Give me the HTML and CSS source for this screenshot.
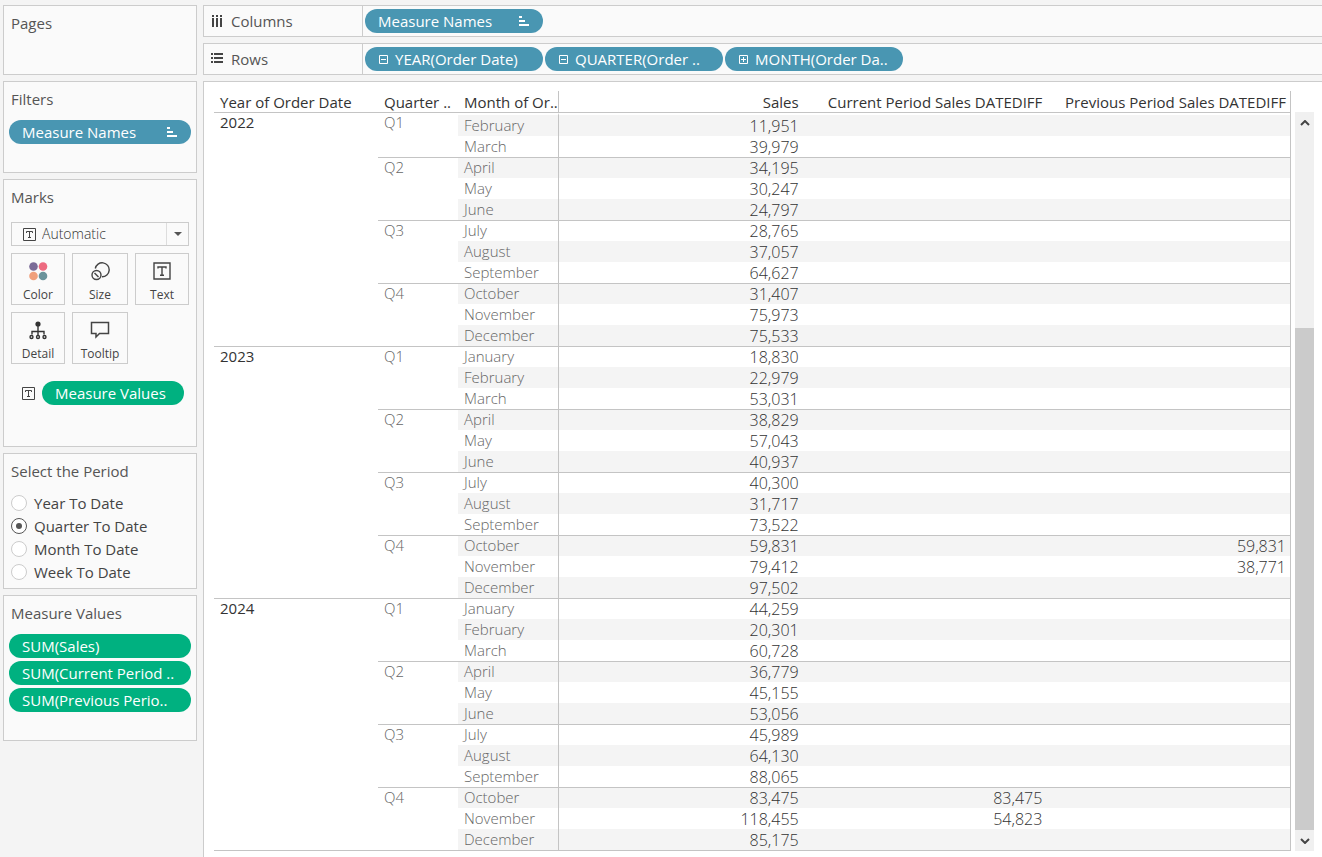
FILE: index.html
```html
<!DOCTYPE html>
<html lang="en">
<head>
  <meta charset="utf-8" />
  <meta name="viewport" content="width=device-width, initial-scale=1" />
  <title>Period Sales</title>
  <link rel="stylesheet" href="styles.css">
</head>
<body>

  <svg class="sprite" aria-hidden="true">
    <symbol id="sort" viewBox="0 0 10 10">
      <path d="M0 0h3v2H0zM0 4h6v2H0zM0 8h10v2H0z" fill="currentColor" />
    </symbol>
    <symbol id="text" viewBox="0 0 13 13">
      <path d="M.5.5h12v12H.5z" fill="none" stroke="currentColor" />
      <path d="M3.500 5V3.500h6V5M6.500 3.500v6M5 9.500h3" fill="none" stroke="currentColor" />
    </symbol>
    <symbol id="minus" viewBox="0 0 9 9">
      <path d="M.5.5h8v8h-8zM2 4.500h5" fill="none" stroke="currentColor" />
    </symbol>
    <symbol id="plus" viewBox="0 0 9 9">
      <path d="M.5.5h8v8h-8zM2 4.500h5M4.500 2v5" fill="none" stroke="currentColor" />
    </symbol>
  </svg>

  <aside class="sidebar">
    <section class="card pages">
      <h2>Pages</h2>
    </section>

    <section class="card filters">
      <h2>Filters</h2>
      <button class="pill blue"><span>Measure Names</span><svg class="sort"><use href="#sort" /></svg></button>
    </section>

    <section class="card marks">
      <h2>Marks</h2>
      <div class="mark-type">
        <svg class="type-icon"><use href="#text" /></svg>
        <select aria-label="Mark type">
          <option>Automatic</option>
        </select>
        <span class="arrow"></span>
      </div>
      <div class="mark-buttons">
        <button>
          <svg viewBox="0 0 20 20">
            <circle cx="5.500" cy="5.500" r="4.300" fill="#7b6c98" />
            <circle cx="15" cy="5.500" r="4.300" fill="#ed6a80" />
            <circle cx="5.500" cy="15" r="4.300" fill="#f0a07c" />
            <circle cx="15" cy="15" r="4.300" fill="#6b939b" />
          </svg>
          Color
        </button>
        <button>
          <svg viewBox="0 0 20 20" fill="none" stroke="#444" stroke-width="1.400">
            <path d="M5.300 7.500A7 7 0 1 1 12 15.800" />
            <circle cx="6.500" cy="14" r="4.500" />
            <path d="M4.500 12l4 4" />
          </svg>
          Size
        </button>
        <button>
          <svg viewBox="0 0 20 20" fill="none" stroke="#444" stroke-width="1.400">
            <path d="M2 2h16v16H2z" />
            <path d="M6 7.500V6h8v1.500M10 6v8M8 14.300h4" />
          </svg>
          Text
        </button>
        <button>
          <svg viewBox="0 0 20 20" fill="none" stroke="#333" stroke-width="1.400">
            <circle cx="10" cy="4" r="2.600" fill="#333" stroke="none" />
            <path d="M10 6v9M4 14.500V11.500h12v3" />
            <circle cx="3.500" cy="17" r="1.500" />
            <circle cx="10" cy="17" r="1.500" />
            <circle cx="16.500" cy="17" r="1.500" />
          </svg>
          Detail
        </button>
        <button>
          <svg viewBox="0 0 20 20" fill="none" stroke="#444" stroke-width="1.500">
            <path d="M1.500 2.500h17v11h-9L6 17v-3.500H1.500z" />
          </svg>
          Tooltip
        </button>
      </div>
      <div class="encoding">
        <svg><use href="#text" /></svg>
        <button class="pill green"><span>Measure Values</span></button>
      </div>
    </section>

    <section class="card period">
      <h2>Select the Period</h2>
      <label><input type="radio" name="period" /><span>Year To Date</span></label>
      <label><input type="radio" name="period" checked /><span>Quarter To Date</span></label>
      <label><input type="radio" name="period" /><span>Month To Date</span></label>
      <label><input type="radio" name="period" /><span>Week To Date</span></label>
    </section>

    <section class="card values">
      <h2>Measure Values</h2>
      <button class="pill green"><span>SUM(Sales)</span></button>
      <button class="pill green"><span>SUM(Current Period ..</span></button>
      <button class="pill green"><span>SUM(Previous Perio..</span></button>
    </section>
  </aside>

  <main>
    <div class="shelf">
      <h2>
        <svg viewBox="0 0 12 12" fill="#444"><path d="M1 0h2v2H1zM5 0h2v2H5zM9 0h2v2H9zM1 3h2v9H1zM5 3h2v9H5zM9 3h2v9H9z" /></svg>
        Columns
      </h2>
      <button class="pill blue"><span>Measure Names</span><svg class="sort"><use href="#sort" /></svg></button>
    </div>
    <div class="shelf">
      <h2>
        <svg viewBox="0 0 12 12" fill="#444"><path d="M0 0h2v2H0zM0 4h2v2H0zM0 8h2v2H0zM3 0h9v2H3zM3 4h9v2H3zM3 8h9v2H3z" /></svg>
        Rows
      </h2>
      <button class="pill blue"><svg class="expand"><use href="#minus" /></svg><span>YEAR(Order Date)</span></button>
      <button class="pill blue"><svg class="expand"><use href="#minus" /></svg><span>QUARTER(Order ..</span></button>
      <button class="pill blue"><svg class="expand"><use href="#plus" /></svg><span>MONTH(Order Da..</span></button>
    </div>

    <div class="sheet">
      <table>
        <colgroup>
          <col class="col-year"><col class="col-quarter"><col class="col-month"><col><col><col>
        </colgroup>
        <thead>
          <tr>
            <th>Year of Order Date</th>
            <th>Quarter ..</th>
            <th class="month">Month of Or..</th>
            <th class="num">Sales</th>
            <th class="num">Current Period Sales DATEDIFF</th>
            <th class="num">Previous Period Sales DATEDIFF</th>
          </tr>
        </thead>
        <tbody>
          <tr><th class="year" rowspan="11">2022</th><th class="quarter" rowspan="2">Q1</th><th class="month">February</th><td>11,951</td><td></td><td></td></tr>
          <tr><th class="month">March</th><td>39,979</td><td></td><td></td></tr>
          <tr class="line"><th class="quarter" rowspan="3">Q2</th><th class="month">April</th><td>34,195</td><td></td><td></td></tr>
          <tr><th class="month">May</th><td>30,247</td><td></td><td></td></tr>
          <tr><th class="month">June</th><td>24,797</td><td></td><td></td></tr>
          <tr class="line"><th class="quarter" rowspan="3">Q3</th><th class="month">July</th><td>28,765</td><td></td><td></td></tr>
          <tr><th class="month">August</th><td>37,057</td><td></td><td></td></tr>
          <tr><th class="month">September</th><td>64,627</td><td></td><td></td></tr>
          <tr class="line"><th class="quarter" rowspan="3">Q4</th><th class="month">October</th><td>31,407</td><td></td><td></td></tr>
          <tr><th class="month">November</th><td>75,973</td><td></td><td></td></tr>
          <tr><th class="month">December</th><td>75,533</td><td></td><td></td></tr>

          <tr class="line"><th class="year" rowspan="12">2023</th><th class="quarter" rowspan="3">Q1</th><th class="month">January</th><td>18,830</td><td></td><td></td></tr>
          <tr><th class="month">February</th><td>22,979</td><td></td><td></td></tr>
          <tr><th class="month">March</th><td>53,031</td><td></td><td></td></tr>
          <tr class="line"><th class="quarter" rowspan="3">Q2</th><th class="month">April</th><td>38,829</td><td></td><td></td></tr>
          <tr><th class="month">May</th><td>57,043</td><td></td><td></td></tr>
          <tr><th class="month">June</th><td>40,937</td><td></td><td></td></tr>
          <tr class="line"><th class="quarter" rowspan="3">Q3</th><th class="month">July</th><td>40,300</td><td></td><td></td></tr>
          <tr><th class="month">August</th><td>31,717</td><td></td><td></td></tr>
          <tr><th class="month">September</th><td>73,522</td><td></td><td></td></tr>
          <tr class="line"><th class="quarter" rowspan="3">Q4</th><th class="month">October</th><td>59,831</td><td></td><td>59,831</td></tr>
          <tr><th class="month">November</th><td>79,412</td><td></td><td>38,771</td></tr>
          <tr><th class="month">December</th><td>97,502</td><td></td><td></td></tr>

          <tr class="line"><th class="year" rowspan="12">2024</th><th class="quarter" rowspan="3">Q1</th><th class="month">January</th><td>44,259</td><td></td><td></td></tr>
          <tr><th class="month">February</th><td>20,301</td><td></td><td></td></tr>
          <tr><th class="month">March</th><td>60,728</td><td></td><td></td></tr>
          <tr class="line"><th class="quarter" rowspan="3">Q2</th><th class="month">April</th><td>36,779</td><td></td><td></td></tr>
          <tr><th class="month">May</th><td>45,155</td><td></td><td></td></tr>
          <tr><th class="month">June</th><td>53,056</td><td></td><td></td></tr>
          <tr class="line"><th class="quarter" rowspan="3">Q3</th><th class="month">July</th><td>45,989</td><td></td><td></td></tr>
          <tr><th class="month">August</th><td>64,130</td><td></td><td></td></tr>
          <tr><th class="month">September</th><td>88,065</td><td></td><td></td></tr>
          <tr class="line"><th class="quarter" rowspan="3">Q4</th><th class="month">October</th><td>83,475</td><td>83,475</td><td></td></tr>
          <tr><th class="month">November</th><td>118,455</td><td>54,823</td><td></td></tr>
          <tr><th class="month">December</th><td>85,175</td><td></td><td></td></tr>
        </tbody>
      </table>

      <div class="scrollbar">
        <button aria-label="Scroll up"><svg viewBox="0 0 10 6"><path d="M1 5l4-4 4 4" /></svg></button>
        <div class="track"><div class="thumb"></div></div>
        <button aria-label="Scroll down"><svg viewBox="0 0 10 6"><path d="M1 1l4 4 4-4" /></svg></button>
      </div>
    </div>
  </main>

</body>
</html>
```

FILE: styles.css
```css
* {
  box-sizing: border-box;
}
body {
  display: flex;
  gap: 6px;
  min-height: 100vh;
  margin: 0;
  padding: 5px 0 0 3px;
  font: 15px/20px "Open Sans", "Noto Sans", sans-serif;
  color: #444;
  background: #f4f4f4;
}
h2 {
  margin: 0;
  font-size: 15px;
  font-weight: 400;
  line-height: 20px;
  color: #555;
}
button {
  padding: 0;
  border: none;
  font: inherit;
  color: inherit;
  background: none;
  cursor: pointer;
}
svg {
  display: block;
  flex: none;
}
.sprite {
  position: absolute;
  width: 0;
  height: 0;
}

/* sidebar */
.sidebar {
  display: flex;
  flex: none;
  flex-direction: column;
  gap: 6px;
  width: 194px;
}
.card {
  padding: 7px;
  border: 1px solid #ccc;
  background: #fafafa;
}
.card h2 {
  flex: none;
}
.pages {
  min-height: 70px;
}
.filters, .values {
  padding: 7px 5px 28px;
}
.filters h2, .values h2 {
  margin: 0 2px 11px;
}
.marks {
  padding-bottom: 41px;
}
.period {
  padding-bottom: 5px;
}

.pill {
  display: flex;
  align-items: center;
  width: 100%;
  height: 24px;
  padding: 0 13px;
  border-radius: 12px;
  font-weight: 500;
  color: #fff;
  white-space: nowrap;
}
.pill + .pill {
  margin-top: 3px;
}
.blue {
  background: #4996b2;
}
.green {
  background: #00b180;
}
.sort {
  width: 10px;
  height: 10px;
  margin-left: auto;
  margin-right: 1px;
}
.expand {
  width: 9px;
  height: 9px;
  margin: 0 7px 0 1px;
}

.mark-type {
  display: grid;
  grid-template-columns: 30px 1fr 22px;
  align-items: center;
  height: 24px;
  margin-top: 15px;
  border: 1px solid #ccc;
}
.type-icon {
  width: 13px;
  height: 13px;
  margin-left: 11px;
}
.mark-type select {
  height: 22px;
  padding: 0;
  border: none;
  font: inherit;
  font-size: 14px;
  font-weight: 300;
  color: #333;
  background: none;
  appearance: none;
}
.arrow {
  display: grid;
  place-items: center;
  height: 22px;
  border-left: 1px solid #ddd;
}
.arrow::after {
  content: "";
  border: 4px solid transparent;
  border-top-color: #555;
  border-bottom: none;
}
.mark-buttons {
  display: grid;
  grid-template-columns: 54px 56px 54px;
  justify-content: space-between;
  row-gap: 7px;
  margin-top: 7px;
}
.mark-buttons button {
  display: flex;
  flex-direction: column;
  align-items: center;
  gap: 6px;
  height: 52px;
  padding-top: 7px;
  border: 1px solid #ccc;
  font-size: 12px;
  line-height: 16px;
}
.mark-buttons svg {
  width: 20px;
  height: 20px;
}
.encoding {
  display: flex;
  align-items: center;
  gap: 7px;
  margin-top: 17px;
  padding: 0 5px 0 11px;
}
.encoding svg {
  width: 13px;
  height: 13px;
}

.period h2 {
  margin-bottom: 10px;
}
.period label {
  display: flex;
  align-items: center;
  gap: 7px;
  height: 23px;
}
.period input {
  display: grid;
  place-items: center;
  width: 16px;
  height: 16px;
  margin: 0;
  border: 1px solid #ccc;
  border-radius: 50%;
  background: #fff;
  appearance: none;
}
.period input:checked {
  border-color: #555;
}
.period input:checked::after {
  content: "";
  width: 6px;
  height: 6px;
  border-radius: 50%;
  background: #555;
}

/* shelves */
main {
  display: flex;
  flex: 1;
  flex-direction: column;
  gap: 6px;
  min-width: 0;
}
.shelf {
  display: flex;
  align-items: center;
  gap: 2px;
  height: 32px;
  border: 1px solid #ccc;
  border-right: none;
  background: #fafafa;
}
.shelf h2 {
  display: flex;
  align-items: center;
  gap: 8px;
  width: 159px;
  height: 30px;
  padding-left: 7px;
  border-right: 1px solid #ccc;
}
.shelf h2 svg {
  width: 12px;
  height: 12px;
}
.shelf .pill {
  width: 178px;
  margin: 0;
}

/* view */
.sheet {
  display: flex;
  flex: 1;
  align-items: flex-start;
  gap: 4px;
  padding: 9px 7px 6px 10px;
  border: 1px solid #ccc;
  border-width: 1px 0 0 1px;
  background: #fff;
}
table {
  flex: 1;
  table-layout: fixed;
  width: 100%;
  border-right: 1px solid #c4c4c4;
  border-bottom: 1px solid #c4c4c4;
  border-spacing: 0;
}
.col-year {
  width: 164px;
}
.col-quarter {
  width: 80px;
}
.col-month {
  width: 101px;
}
th, td {
  height: 21px;
  padding: 0 6px;
  font-weight: 300;
  line-height: 20px;
  text-align: left;
  white-space: nowrap;
}
td, .num {
  padding-right: 4px;
  text-align: right;
}
td {
  font-size: 16px;
  color: #333;
}
thead th {
  height: 22px;
  border-bottom: 1px solid #c4c4c4;
  font-weight: 400;
  color: #333;
}
.month {
  padding-right: 0;
  border-right: 1px solid #c4c4c4;
}
tbody th {
  padding-bottom: 2px;
  line-height: 18px;
  color: #666;
}
.year, .quarter {
  vertical-align: top;
}
tbody .year {
  font-weight: 400;
  color: #333;
}
tbody tr:nth-child(odd) :is(.month, td) {
  background: #f4f4f4;
}
/* the first row stands clear of the header line */
tbody tr:first-child :is(.month, td) {
  height: 23px;
  border-top: 2px solid #fff;
}
.line > * {
  border-top: 1px solid #c4c4c4;
}

.scrollbar {
  display: flex;
  flex: none;
  flex-direction: column;
  align-self: stretch;
  width: 19px;
  margin: 21px 1px 0 0;
  background: #f0f0f0;
}
.scrollbar button {
  display: grid;
  place-items: center;
  height: 21px;
}
.scrollbar svg {
  width: 10px;
  height: 6px;
  fill: none;
  stroke: #444;
  stroke-width: 2;
}
.track {
  display: flex;
  flex: 1;
  flex-direction: column;
  justify-content: flex-end;
}
.thumb {
  height: 72%;
  background: #cbcbcb;
}
```
